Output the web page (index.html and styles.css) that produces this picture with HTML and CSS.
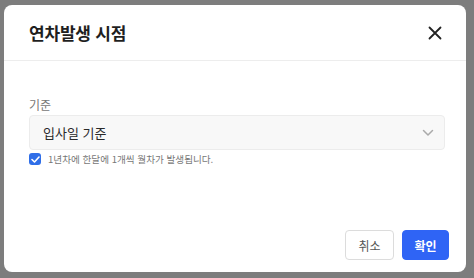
FILE: index.html
```html
<!DOCTYPE html>
<html lang="ko">
<head>
<meta charset="utf-8">
<link rel="stylesheet" href="styles.css">
</head>
<body>
<div class="modal">
  <div class="header">
    <h1 class="title">연차발생 시점</h1>
    <svg class="close" width="14" height="14" viewBox="0 0 14 14"><path d="M1.5 1.5 L12.5 12.5 M12.5 1.5 L1.5 12.5" stroke="#222" stroke-width="1.8" stroke-linecap="round"/></svg>
  </div>
  <div class="content">
    <div class="label">기준</div>
    <div class="select">
      <span>입사일 기준</span>
      <svg class="chev" width="12" height="8" viewBox="0 0 12 8"><path d="M1.5 1.5 L6 6 L10.5 1.5" fill="none" stroke="#aaa" stroke-width="1.5" stroke-linecap="round" stroke-linejoin="round"/></svg>
    </div>
    <div class="check">
      <span class="box"><svg width="9" height="7" viewBox="0 0 9 7"><path d="M1 3.5 L3.5 6 L8 1" fill="none" stroke="#fff" stroke-width="1.6" stroke-linecap="round" stroke-linejoin="round"/></svg></span>
      <span class="check-text">1년차에 한달에 1개씩 월차가 발생됩니다.</span>
    </div>
  </div>
  <div class="footer">
    <button class="btn cancel">취소</button>
    <button class="btn ok">확인</button>
  </div>
</div>
</body>
</html>
```
FILE: styles.css
```css
* { box-sizing: border-box; }
html, body { margin: 0; padding: 0; }
body {
  background: #7d7d7d;
  width: 474px;
  height: 278px;
  overflow: hidden;
  font-family: "Noto Sans CJK KR", "Noto Sans", sans-serif;
}
.modal {
  margin: 5px 0 0 4px;
  width: 462px;
  height: 267px;
  background: #fff;
  border-radius: 8px;
  display: flex;
  flex-direction: column;
}
.header {
  height: 56px;
  border-bottom: 1px solid #ededed;
  display: flex;
  align-items: center;
  justify-content: space-between;
  padding: 0 24px 0 25px;
}
.title {
  margin: 0;
  font-size: 17px;
  font-weight: 700;
  color: #1f1f1f;
  letter-spacing: -0.2px;
}
.close { display: block; margin-top: 1px; }
.content {
  flex: 1;
  padding: 36px 21px 0 25px;
}
.label {
  font-size: 12px;
  color: #777;
  line-height: 16px;
  margin-bottom: 2px;
}
.select {
  height: 35px;
  background: #f8f8f8;
  border: 1px solid #ececec;
  border-radius: 4px;
  display: flex;
  align-items: center;
  justify-content: space-between;
  padding: 0 10px 0 13px;
  font-size: 13px;
  color: #2a2a2a;
}
.chev { display: block; }
.check {
  display: flex;
  align-items: center;
  margin-top: 1px;
  height: 16px;
}
.box {
  width: 12px;
  height: 12px;
  border-radius: 3px;
  background: #2f6ee8;
  display: flex;
  align-items: center;
  justify-content: center;
  margin-right: 7px;
}
.box svg { display: block; }
.check-text {
  font-size: 9.6px;
  color: #777;
}
.footer {
  display: flex;
  justify-content: flex-end;
  gap: 8px;
  padding: 0 17px 12px 0;
}
.btn {
  height: 30px;
  border-radius: 4px;
  font-family: inherit;
  font-size: 12px;
  padding: 0;
}
.cancel {
  width: 49px;
  background: #fff;
  border: 1px solid #dcdcdc;
  color: #555;
}
.ok {
  width: 47px;
  background: #2f64f5;
  border: 1px solid #2f64f5;
  color: #fff;
  font-weight: 700;
}
```
